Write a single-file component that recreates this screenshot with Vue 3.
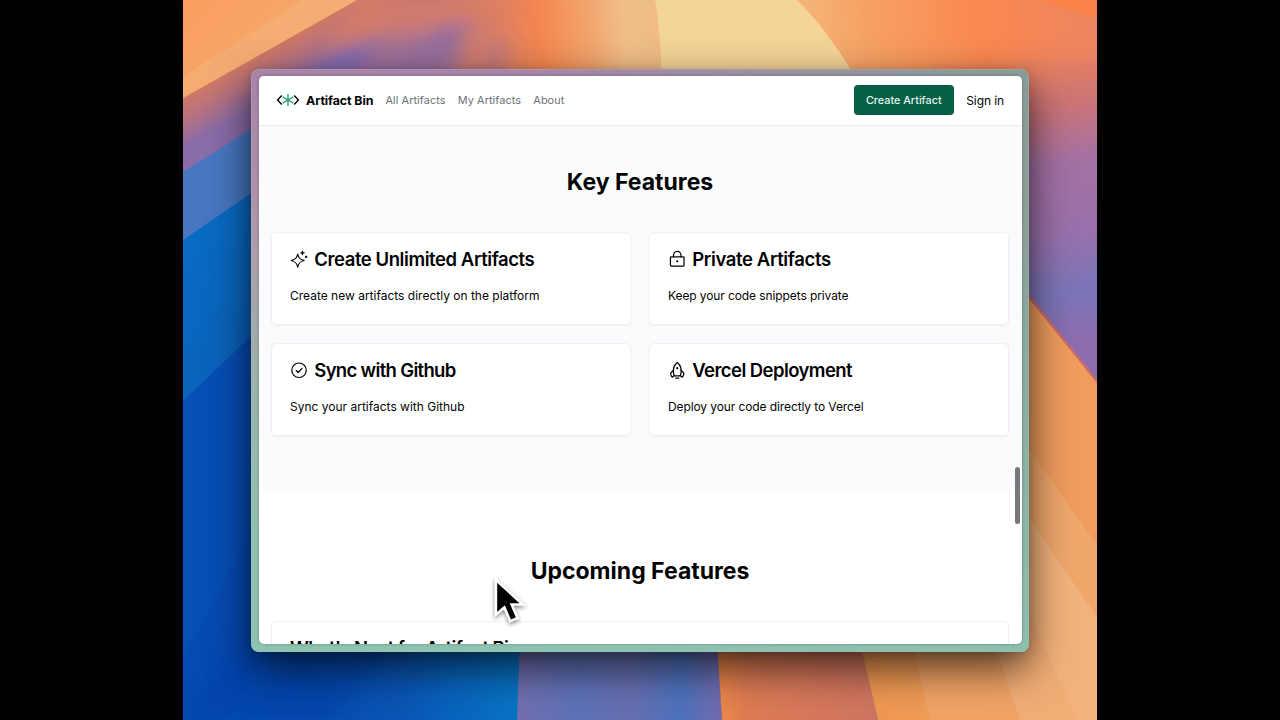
<template>
  <div class="screen">
    <div class="desktop">
      <svg class="wallpaper" viewBox="183 0 914 720" preserveAspectRatio="none">
        <defs>
          <filter id="soft" x="-20%" y="-20%" width="140%" height="140%">
            <feGaussianBlur stdDeviation="8" />
          </filter>
          <linearGradient id="topGlow" gradientUnits="userSpaceOnUse" x1="340" y1="100" x2="1097" y2="30">
            <stop offset="0" stop-color="#d07a70" stop-opacity="0" />
            <stop offset="0.14" stop-color="#d87b64" stop-opacity="0.65" />
            <stop offset="0.27" stop-color="#f4864f" />
            <stop offset="0.33" stop-color="#f2a26a" />
            <stop offset="0.38" stop-color="#f0bd88" />
            <stop offset="0.6" stop-color="#f4b87c" />
            <stop offset="0.7" stop-color="#f7a164" />
            <stop offset="0.85" stop-color="#fa8850" />
            <stop offset="1" stop-color="#ee8560" />
          </linearGradient>
          <linearGradient id="ridge" gradientUnits="userSpaceOnUse" x1="270" y1="49" x2="306" y2="113">
            <stop offset="0" stop-color="#cf7866" />
            <stop offset="0.28" stop-color="#b57280" />
            <stop offset="0.6" stop-color="#8a6ca8" />
            <stop offset="1" stop-color="#8a6ca8" />
          </linearGradient>
          <linearGradient id="corner" x1="0" y1="0" x2="1" y2="0.6">
            <stop offset="0" stop-color="#fa9e5f" />
            <stop offset="1" stop-color="#f5ae74" />
          </linearGradient>
          <linearGradient id="sky" x1="0" y1="0" x2="0.4" y2="1">
            <stop offset="0" stop-color="#086fc6" />
            <stop offset="1" stop-color="#0b5fb8" />
          </linearGradient>
          <linearGradient id="deep" gradientUnits="userSpaceOnUse" x1="183" y1="0" x2="520" y2="0">
            <stop offset="0" stop-color="#0650b7" />
            <stop offset="0.35" stop-color="#084aae" />
            <stop offset="0.65" stop-color="#0a55b4" />
            <stop offset="0.78" stop-color="#0862bc" />
            <stop offset="1" stop-color="#0874c4" />
          </linearGradient>
          <linearGradient id="rightPurple" gradientUnits="userSpaceOnUse" x1="1010" y1="40" x2="1060" y2="340">
            <stop offset="0" stop-color="#ee835a" stop-opacity="0" />
            <stop offset="0.24" stop-color="#cc7476" />
            <stop offset="0.42" stop-color="#a571a3" />
            <stop offset="0.65" stop-color="#9a71ac" />
            <stop offset="0.85" stop-color="#7a75b8" />
            <stop offset="1" stop-color="#8d6db0" />
          </linearGradient>
          <linearGradient id="violet" x1="0" y1="0" x2="1" y2="0">
            <stop offset="0" stop-color="#736fb0" />
            <stop offset="0.3" stop-color="#5c72b8" />
            <stop offset="0.55" stop-color="#686fb0" />
            <stop offset="0.8" stop-color="#4c72bd" />
            <stop offset="1" stop-color="#746bac" />
          </linearGradient>
          <linearGradient id="clay" x1="0" y1="0" x2="1" y2="0">
            <stop offset="0" stop-color="#ee8848" />
            <stop offset="0.2" stop-color="#dd7b54" />
            <stop offset="1" stop-color="#cf7461" />
          </linearGradient>
          <linearGradient id="amber" x1="0" y1="0" x2="1" y2="0">
            <stop offset="0" stop-color="#ee9650" />
            <stop offset="1" stop-color="#f4a564" />
          </linearGradient>
        </defs>
        <rect x="183" width="914" height="720" fill="#0850b4" />
        <path d="M183 0H1097V300H183Z" fill="url(#ridge)" />
        <path d="M183 0H1097V300H183Z" fill="url(#topGlow)" />
        <g filter="url(#soft)">
          <path d="M365 0H520L430 28L320 50Z" fill="#ee8455" opacity="0.5" />
          <path d="M340 100L440 22L475 18L400 100Z" fill="#8a6ca6" opacity="0.6" />
          <path d="M400 100L440 40L465 36L445 100Z" fill="#8069ae" opacity="0.5" />
          <path d="M470 100L490 40L510 40L505 100Z" fill="#a87290" opacity="0.4" />
          <path d="M250 110L350 48L375 52L300 110Z" fill="#7a68b2" opacity="0.55" />
        </g>
        <path d="M183 0H357L183 98Z" fill="url(#corner)" />
        <path d="M183 76L225 50L290 8L302 0H357L183 98Z" fill="#f2b47c" opacity="0.5" />
        <path d="M183 172L270 117V300H183Z" fill="#4877c1" />
        <path d="M183 240L270 180V420H183Z" fill="url(#sky)" />
        <path d="M183 401L270 318L560 500L517 720H183Z" fill="url(#deep)" />
        <path d="M183 660L270 495V650L225 720H183Z" fill="#0648b0" opacity="0.6" />
        <path d="M183 720L235 640H400L330 720Z" fill="#0540a8" opacity="0.5" filter="url(#soft)" />
        <path d="M655 0H797Q828 30 860 85H662Q661 35 655 0Z" fill="#f5d497" />
        <path d="M930 60H1097V400H1000Z" fill="url(#rightPurple)" />
        <path d="M1000 0H1097V130L1040 120Z" fill="url(#rightPurple)" />
        <path d="M1040 0H1097V18Q1065 10 1040 0Z" fill="#fb8348" />
        <path d="M1010 272L1097 382V720H1010Z" fill="#ef9c5d" />
        <path d="M1010 270L1097 379V383L1010 275Z" fill="#c4696f" />
        <path d="M1010 422L1097 545V720H1010Z" fill="#efa76b" />
        <path d="M1010 490L1097 617V720H1010Z" fill="#f3b27b" />
        <path d="M520 640H718L722 720H517Z" fill="url(#violet)" />
        <path d="M717 640H860L878 720H722Z" fill="url(#clay)" />
        <path d="M850 600H1022L1077 720H878Z" fill="url(#amber)" />
        <path d="M904 600H1022L1077 720H930Z" fill="#f1a365" />
        <path d="M980 600H1022L1077 720H1020Z" fill="#f2ad75" />
      </svg>

      <div class="window">
        <div class="page">
          <header class="navbar">
            <div class="brand">
              <svg class="logo" viewBox="0 0 24 14" fill="none" stroke="currentColor" stroke-width="1.4">
                <path d="M5.8 2.6L1.6 7L5.8 11.4M18.2 2.6L22.4 7L18.2 11.4" />
                <path class="logo-star" d="M12 1V13M6.6 3.9L17.4 10.1M6.6 10.1L17.4 3.9" />
              </svg>
              <span class="brand-name">Artifact Bin</span>
            </div>
            <nav class="nav-links">
              <a v-for="link in links" :key="link">{{ link }}</a>
            </nav>
            <button class="btn-create">Create Artifact</button>
            <a class="sign-in">Sign in</a>
          </header>

          <section class="features">
            <h2>Key Features</h2>
            <div class="feature-grid">
              <div v-for="feature in features" :key="feature.title" class="card" :class="`card-${feature.icon}`">
                <h3>
                  <svg class="card-icon" viewBox="0 0 24 24" fill="none" stroke="currentColor" stroke-width="1.6" stroke-linejoin="round" stroke-linecap="round">
                    <template v-if="feature.icon === 'sparkle'">
                      <path d="M10 5.2C11 10.4 12.8 12.5 18.4 13.6C12.8 14.8 11 16.8 10 22.2C9 16.8 7.2 14.8 1.6 13.6C7.2 12.5 9 10.4 10 5.2Z" />
                      <path d="M16.2 1.8V5.8M14.2 3.8H18.2M20.9 8V9.8M20 8.9H21.8" stroke-width="1.8" />
                    </template>
                    <template v-else-if="feature.icon === 'lock'">
                      <rect x="3.2" y="8.8" width="17.6" height="12" rx="1" />
                      <path d="M7.2 8.8V6.5A4.8 4.8 0 0 1 16.8 6.5V8.8" />
                      <circle cx="12" cy="14.6" r="0.6" fill="currentColor" />
                    </template>
                    <template v-else-if="feature.icon === 'check'">
                      <circle cx="11.7" cy="12" r="9.4" />
                      <path d="M7.9 12.4L10.6 14.9L15.6 9.5" />
                    </template>
                    <template v-else>
                      <path d="M8 19.2C6.1 13 6.4 6.2 12 1.9C17.6 6.2 17.9 13 16 19.2Z" />
                      <path d="M6.9 12.2L3.9 15.2C3.3 16 3.4 19 5.4 20.9L8 19.2M17.1 12.2L20.1 15.2C20.7 16 20.6 19 18.6 20.9L16 19.2M10 22.3H14" />
                      <circle cx="12" cy="9.3" r="0.6" fill="currentColor" />
                    </template>
                  </svg>
                  <span>{{ feature.title }}</span>
                </h3>
                <p>{{ feature.text }}</p>
              </div>
            </div>
          </section>

          <section class="upcoming">
            <h2>Upcoming Features</h2>
            <div class="card card-wide">
              <h3><span>What's Next for Artifact Bin</span></h3>
            </div>
          </section>
          <div class="scroll-thumb"></div>
        </div>
      </div>

      <svg class="cursor" viewBox="0 0 36 52">
        <path d="M3 3V40L12 32.2L18.2 46.8L26 43.5L19.8 29.2H31.5Z" fill="#000" stroke="#fff" stroke-width="2.8" />
      </svg>
    </div>
  </div>
</template>

<script setup>
const links = ['All Artifacts', 'My Artifacts', 'About'];

const features = [
  { icon: 'sparkle', title: 'Create Unlimited Artifacts', text: 'Create new artifacts directly on the platform' },
  { icon: 'lock', title: 'Private Artifacts', text: 'Keep your code snippets private' },
  { icon: 'check', title: 'Sync with Github', text: 'Sync your artifacts with Github' },
  { icon: 'rocket', title: 'Vercel Deployment', text: 'Deploy your code directly to Vercel' }
];
</script>

<style>
body {
  margin: 0;
  background: #000;
}
</style>

<style scoped>
.screen {
  width: 1280px;
  height: 720px;
  display: flex;
  justify-content: center;
  overflow: hidden;
  background: #000;
  font-family: Inter, "Liberation Sans", sans-serif;
  color: #030303;
}

.desktop {
  position: relative;
  width: 914px;
  height: 720px;
  overflow: hidden;
}

.wallpaper {
  position: absolute;
  inset: 0;
  width: 100%;
  height: 100%;
}

.window {
  position: absolute;
  left: 68px;
  top: 68.5px;
  width: 778px;
  height: 583px;
  box-sizing: border-box;
  padding: 7.5px 7px 8px 8px;
  border-radius: 8px;
  background:
    linear-gradient(90deg, rgba(134, 158, 148, 0) 35%, rgba(134, 158, 148, 0.9) 100%),
    linear-gradient(180deg, #a684a8 0%, #b096a8 30%, #a3a8a8 55%, #98bba9 80%, #93c0ac 100%);
  box-shadow:
    inset 0 0 0 1px rgba(255, 255, 255, 0.12),
    0 16px 42px rgba(0, 0, 0, 0.68),
    0 2px 8px rgba(0, 0, 0, 0.15);
}

.window::before {
  content: "";
  position: absolute;
  inset: 0;
  border-radius: 8px;
  background: linear-gradient(180deg, rgba(142, 196, 178, 0) 20%, rgba(142, 196, 178, 0.85) 100%);
}

.page {
  position: relative;
  width: 763px;
  height: 568px;
  border-radius: 5px;
  overflow: hidden;
  background: #fff;
  box-shadow: 0 0 3px rgba(0, 0, 0, 0.3);
}

.navbar {
  display: flex;
  align-items: center;
  height: 49.5px;
  box-sizing: border-box;
  padding: 0 18px 0 17px;
  border-bottom: 1px solid #e8eaef;
  background: #fff;
}

.brand {
  display: flex;
  align-items: center;
  gap: 6px;
}

.logo {
  width: 24px;
  height: 14px;
}

.logo-star {
  stroke: #2aa37a;
}

.brand-name {
  width: 68px;
  font-size: 12.4px;
  font-weight: 700;
  letter-spacing: -0.08px;
  white-space: nowrap;
}

.nav-links {
  display: flex;
  gap: 12.3px;
  flex: 1;
  margin-left: 11.5px;
  font-size: 10.9px;
  letter-spacing: 0.06px;
  color: #6b6f78;
  white-space: nowrap;
}

.btn-create {
  width: 100px;
  height: 30px;
  padding: 0;
  border: none;
  border-radius: 4px;
  background: #065f46;
  color: #e6f7ef;
  font-family: inherit;
  font-size: 10.8px;
  font-weight: 500;
  white-space: nowrap;
}

.sign-in {
  margin-left: 12.5px;
  font-size: 12px;
  letter-spacing: -0.1px;
  white-space: nowrap;
}

.features {
  height: 370px;
  box-sizing: border-box;
  padding: 40px 13px 0 12px;
  background: linear-gradient(180deg, #fafbfd 0%, #fafbfd 97%, #fff 100%);
}

h2 {
  margin: 0;
  font-size: 23px;
  line-height: 32px;
  font-weight: 700;
  text-align: center;
}

.feature-grid {
  display: grid;
  grid-template-columns: 1fr 1fr;
  gap: 18px;
  margin-top: 34px;
}

.card {
  height: 93px;
  box-sizing: border-box;
  padding: 14px 18px 0;
  border: 1px solid #eff0f3;
  border-radius: 5px;
  background: #fff;
  box-shadow: 0 1px 2px rgba(20, 30, 60, 0.04);
}

.card h3 {
  display: flex;
  align-items: center;
  gap: 5.8px;
  margin: 0;
  height: 26px;
  font-size: 18.5px;
  font-weight: 600;
  letter-spacing: -0.43px;
  white-space: nowrap;
}

.card h3 span {
  padding-bottom: 2px;
}

.card-check h3 {
  letter-spacing: -0.67px;
}

.card-rocket h3 {
  letter-spacing: -0.57px;
}

.card-lock h3 {
  letter-spacing: -0.38px;
}

.card-icon {
  width: 18.5px;
  height: 18.5px;
}

.card p {
  margin: 14.5px 0 0;
  font-size: 12px;
  line-height: 18px;
  white-space: nowrap;
}

.card-lock p,
.card-rocket p {
  letter-spacing: -0.1px;
}

.upcoming {
  padding: 59.5px 13px 0 12px;
}

.card-wide {
  margin-top: 34px;
}

.card-wide h3 {
  letter-spacing: -0.57px;
}

.scroll-thumb {
  position: absolute;
  right: 2px;
  top: 391px;
  width: 5px;
  height: 57px;
  border-radius: 3px;
  background: #77777b;
}

.cursor {
  position: absolute;
  left: 310px;
  top: 576.5px;
  width: 34px;
  height: 49px;
  filter: drop-shadow(0 2px 2px rgba(0, 0, 0, 0.45));
}
</style>
